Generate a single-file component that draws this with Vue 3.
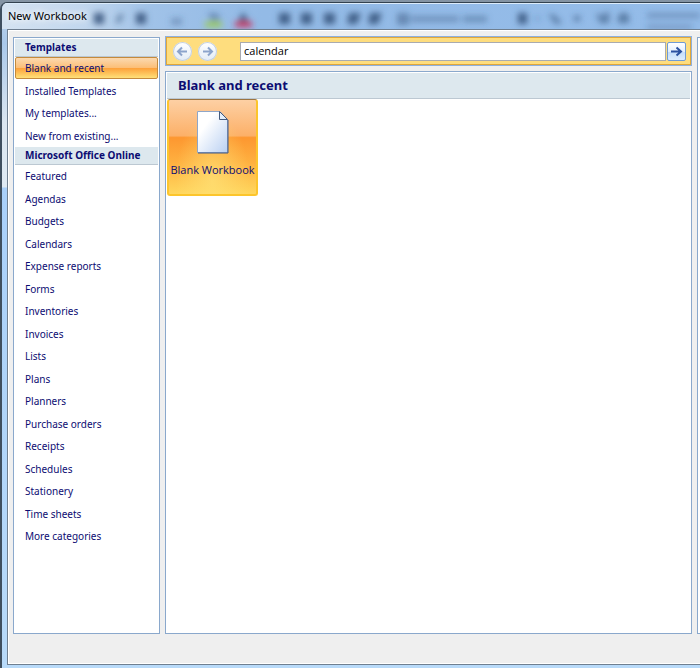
<script setup>
import { ref } from 'vue'

const query = ref('calendar')
const selected = ref('Blank and recent')
const templates = ['Blank and recent', 'Installed Templates', 'My templates...', 'New from existing...']
const online = [
  'Featured', 'Agendas', 'Budgets', 'Calendars', 'Expense reports', 'Forms',
  'Inventories', 'Invoices', 'Lists', 'Plans', 'Planners', 'Purchase orders',
  'Receipts', 'Schedules', 'Stationery', 'Time sheets', 'More categories'
]
</script>

<template>
  <div class="window">
    <header class="titlebar">
      <svg class="glass" width="700" height="30" aria-hidden="true">
        <defs>
          <filter id="soft" x="-10%" y="-50%" width="120%" height="200%"><feGaussianBlur stdDeviation="3" /></filter>
        </defs>
        <g filter="url(#soft)" fill="#38567e">
          <g opacity="0.9">
            <rect x="94" y="13" width="10" height="11" />
            <path d="M119 14h5l-4 9h-5z" opacity="0.7" />
            <rect x="136" y="13" width="10" height="11" />
            <rect x="171" y="18" width="11" height="7" opacity="0.4" />
            <path d="M208 13h9l4 6-4 3h-6z" opacity="0.5" />
            <path d="M243 12l7 11h-13z" />
            <rect x="279" y="13" width="11" height="11" />
            <rect x="301" y="13" width="11" height="11" />
            <rect x="324" y="13" width="11" height="11" />
            <path d="M349 13h12l-4 11h-10z" />
            <path d="M370 13h12l-4 11h-10z" />
            <rect x="518" y="13" width="9" height="11" />
            <path d="M535 17h5v3h-5z" opacity="0.4" />
            <path d="M548 14l6 1 8 8-6 1z" opacity="0.8" />
            <rect x="574" y="16" width="6" height="5" opacity="0.8" />
            <path d="M596 14h5l2 4 2-6h4v11h-9z" opacity="0.7" />
            <path d="M618 16l5-4 6 3v8h-11z" opacity="0.7" />
          </g>
          <rect x="205" y="22" width="17" height="5" fill="#9fd13c" opacity="0.9" />
          <rect x="235" y="22" width="17" height="5" fill="#d9204d" opacity="0.9" />
          <rect x="397" y="13" width="12" height="12" opacity="0.5" />
          <rect x="411" y="16" width="48" height="6" opacity="0.4" />
          <rect x="463" y="16" width="24" height="6" opacity="0.45" />
          <rect x="647" y="13" width="53" height="5" opacity="0.4" />
          <rect x="647" y="25" width="45" height="4" opacity="0.4" />
        </g>
      </svg>
      <h1>New Workbook</h1>
    </header>

    <main class="client">
      <nav class="pane sidebar" aria-label="Template categories">
        <h2>Templates</h2>
        <ul>
          <li v-for="name in templates" :key="name">
            <button type="button" :class="{ active: selected === name }" @click="selected = name">{{ name }}</button>
          </li>
        </ul>
        <h2>Microsoft Office Online</h2>
        <ul>
          <li v-for="name in online" :key="name">
            <button type="button" :class="{ active: selected === name }" @click="selected = name">{{ name }}</button>
          </li>
        </ul>
      </nav>

      <div class="center">
        <form class="search" @submit.prevent>
          <button class="round" type="button" aria-label="Back">
            <svg width="19" height="19" viewBox="0 0 19 19"><path d="M14 9.500H5.500M9 5.500l-4 4 4 4" /></svg>
          </button>
          <button class="round" type="button" aria-label="Forward">
            <svg width="19" height="19" viewBox="0 0 19 19"><path d="M5 9.500h8.500M10 5.500l4 4-4 4" /></svg>
          </button>
          <input v-model="query" type="text" aria-label="Search templates" />
          <button class="go" type="submit" aria-label="Search">
            <svg width="17" height="17" viewBox="0 0 17 17"><path d="M3 8.500h10M8.500 4.500l4.500 4-4.500 4" /></svg>
          </button>
        </form>

        <section class="pane results">
          <h2>Blank and recent</h2>
          <button class="tile" type="button">
            <svg width="32" height="43" viewBox="0 0 32 43" aria-hidden="true">
              <defs>
                <linearGradient id="paper" x1="0" y1="0" x2="1" y2="1">
                  <stop offset="0.3" stop-color="#ffffff" />
                  <stop offset="1" stop-color="#b9d0f2" />
                </linearGradient>
              </defs>
              <path d="M0.500 0.500H23L30.500 8.500V41.500H0.500z" fill="url(#paper)" stroke="#8fa6c8" />
              <path d="M31 9v33H1" fill="none" stroke="#3f5b8c" />
              <path d="M22.500 0.500V8.500H30.500z" fill="#e4eefb" stroke="#44597c" />
            </svg>
            <span>Blank Workbook</span>
          </button>
        </section>
      </div>

      <aside class="pane preview" aria-label="Preview"></aside>
    </main>
  </div>
</template>

<style>
body {
  margin: 0;
  background: #8494a4;
}
</style>

<style scoped>
.window {
  box-sizing: border-box;
  display: flex;
  flex-direction: column;
  min-height: calc(100vh - 2px);
  margin-top: 2px;
  padding-left: 5px;
  padding-bottom: 3px;
  overflow: hidden;
  border-top: 1px solid #33424f;
  border-left: 2px solid #3f4f5f;
  border-top-left-radius: 7px;
  background: linear-gradient(#bdd3ea 0, #a9c8ea 40px, #dbe6f0 120px, #dfeaf4 184px, #a9d0fa 185px, #b8daf9 100%);
  font-family: "Noto Sans", "Open Sans", sans-serif;
  font-size: 11px;
  color: #0c0c72;
}

.titlebar {
  position: relative;
  height: 26px;
  margin-left: -5px;
  overflow: hidden;
  box-shadow: inset 0 1px #dcecfb;
  background: linear-gradient(90deg, #d5e3f1 0, #c2d7ee 80px, #a0c2e8 150px, #93bae6 260px, #94bce9 100%);
}

.glass {
  position: absolute;
  top: -3px;
  left: -2px;
}

h1 {
  position: relative;
  margin: 0;
  padding-left: 6px;
  font-size: 11px;
  line-height: 25px;
  font-weight: 400;
  color: #000;
  text-shadow: 0 0 6px #fff, 0 0 8px #fff;
}

.client {
  flex: 1;
  display: flex;
  gap: 5px;
  padding: 7px 0 30px 5px;
  border: 1px solid #6f7f90;
  border-right: 0;
  box-shadow: inset 1px 1px #fff, inset 0 -1px #fff;
  background: #efefef;
}

.pane {
  box-sizing: border-box;
  border: 1px solid #8aa8cc;
  background: #fff;
}

h2 {
  margin: 0;
  border-bottom: 1px solid #bcc8d2;
  background: #dde8ee;
  font-weight: 700;
}

ul {
  margin: 0;
  padding: 0;
  list-style: none;
}

button {
  padding: 0;
  font: inherit;
  color: inherit;
}

.sidebar {
  flex: 0 0 147px;
  padding: 1px;
  font-size: 10px;
}

.sidebar h2 {
  padding-left: 10px;
  font-size: 10px;
  line-height: 17px;
}

.sidebar li:nth-child(odd) {
  padding-bottom: 1px;
}

.sidebar li button {
  display: block;
  box-sizing: border-box;
  width: 100%;
  height: 22px;
  padding-left: 9px;
  border: 1px solid transparent;
  background: none;
  line-height: 20px;
  text-align: left;
}

.sidebar li .active {
  border-color: #c48a3c;
  border-radius: 2px;
  background: linear-gradient(#fbd9b0 0, #fcbf78 48%, #fda23c 52%, #fec65e 80%, #ffe07a 100%);
}

.center {
  flex: 1;
  display: flex;
  flex-direction: column;
  gap: 5px;
  min-width: 0;
}

.search {
  display: flex;
  align-items: center;
  height: 26px;
  padding: 0 4px 0 6px;
  border: 1px solid #e0a73a;
  outline: 1px solid #8fb0dc;
  margin: 0 1px 1px;
  background: #fedd7e;
}

.round {
  display: flex;
  width: 19px;
  height: 19px;
  margin-right: 6px;
  border: 0;
  border-radius: 50%;
  box-shadow: inset 0 0 0 1px #c3cfdf;
  background: linear-gradient(#fff, #e2ebf6);
}

.round path {
  fill: none;
  stroke: #8ba3cb;
  stroke-width: 2;
}

.search input {
  flex: 1;
  box-sizing: border-box;
  min-width: 0;
  height: 19px;
  margin: 0 1px 0 17px;
  padding: 0 3px 2px;
  border: 1px solid #a9abb0;
  background: #fff;
  font-family: "Open Sans", sans-serif;
  font-size: 11px;
  color: #000;
}

.go {
  display: flex;
  width: 19px;
  height: 19px;
  border: 1px solid #6f9bd6;
  border-radius: 2px;
  background: linear-gradient(#fff 0, #e3effd 50%, #c2dcfa 51%, #dcecfd 100%);
}

.go path {
  fill: none;
  stroke: #2a50a0;
  stroke-width: 2;
}

.results {
  flex: 1;
  padding: 1px;
}

.results h2 {
  padding-left: 11px;
  font-size: 13px;
  line-height: 25px;
}

.tile {
  display: flex;
  flex-direction: column;
  align-items: center;
  gap: 8px;
  box-sizing: border-box;
  width: 91px;
  height: 97px;
  padding-top: 11px;
  border: 2px solid #fcc52c;
  border-top: 1px solid #9c7440;
  border-radius: 3px;
  background:
    radial-gradient(ellipse at 50% 85%, rgba(255, 226, 120, 0.7) 0, rgba(255, 226, 120, 0) 60%),
    linear-gradient(#fdd0a4 0, #fcb068 38%, #fd9730 40%, #feb040 66%, #ffd75e 100%);
  font-family: "Open Sans", sans-serif;
  line-height: 16px;
  white-space: nowrap;
}

.preview {
  flex: 0 0 3px;
  border-right: 0;
}
</style>
